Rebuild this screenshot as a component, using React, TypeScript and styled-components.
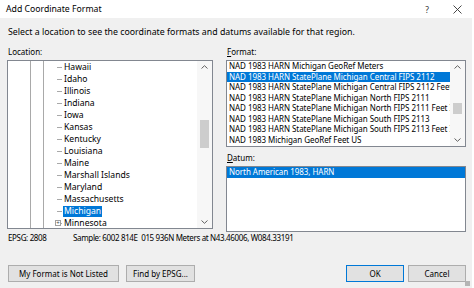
import React from "react";
import styled, { createGlobalStyle } from "styled-components";

const Global = createGlobalStyle`
  html, body { margin: 0; padding: 0; background: #ffffff; }
  body {
    font-family: "Noto Sans", "Open Sans", sans-serif;
    font-size: 8px;
    color: #000000;
  }
  * { box-sizing: border-box; }
`;

const Window = styled.div`
  position: relative;
  width: 472px;
  height: 288px;
  background: #f0f0f0;
  display: flex;
  flex-direction: column;
  overflow: hidden;
`;

const TitleBar = styled.div`
  height: 18px;
  flex: none;
  background: #ffffff;
  display: flex;
  align-items: center;
  padding-left: 6px;
`;

const Title = styled.div`
  flex: 1;
  font-size: 8.7px;
  line-height: 12px;
`;

const TitleButton = styled.div`
  width: 30px;
  height: 18px;
  display: flex;
  align-items: center;
  justify-content: center;
  font-size: 8.5px;
  color: #333;
`;

const Body = styled.div`
  padding: 0 6px 0 7px;
  display: flex;
  flex-direction: column;
`;

const Intro = styled.div`
  margin-top: 8px;
  font-size: 8.8px;
  line-height: 12px;
  padding-left: 1px;
`;

const Columns = styled.div`
  margin-top: 8px;
  display: grid;
  grid-template-columns: 206px 240px;
  column-gap: 13px;
  align-items: start;
`;

const Column = styled.div`
  display: flex;
  flex-direction: column;
`;

const Label = styled.div<{ $gap?: number }>`
  line-height: 12px;
  height: 12px;
  padding-left: 1px;
  margin-top: ${(p) => p.$gap ?? 0}px;
  margin-bottom: 2px;
  u { text-decoration: underline; text-underline-offset: 1px; }
`;

const Box = styled.div<{ $h: number }>`
  height: ${(p) => p.$h}px;
  border: 1px solid #828790;
  background: #ffffff;
  display: flex;
  overflow: hidden;
`;

const TreeList = styled.div`
  flex: 1;
  display: flex;
  flex-direction: column;
  font-size: 8.6px;
  background-image: linear-gradient(#a9a9a9, #a9a9a9), linear-gradient(#a9a9a9, #a9a9a9);
  background-size: 1px 100%, 1px 100%;
  background-position: 22px 0, 35px 0;
  background-repeat: no-repeat;
`;

const TreeRow = styled.div`
  height: 12px;
  flex: none;
  display: flex;
  align-items: center;
  padding-left: 46px;
`;

const Connector = styled.div`
  width: 8px;
  height: 12px;
  flex: none;
  display: flex;
  align-items: center;
  background-image: linear-gradient(#a9a9a9, #a9a9a9);
  background-size: 5px 1px;
  background-position: 3px 50%;
  background-repeat: no-repeat;
`;

const Expander = styled.div`
  width: 6px;
  height: 6px;
  margin-left: 1px;
  border: 1px solid #a0a0a0;
  background: #fff;
  display: flex;
  align-items: center;
  justify-content: center;
  font-size: 6px;
  line-height: 1;
  color: #444;
`;

const ItemText = styled.span<{ $sel?: boolean }>`
  margin-left: 1px;
  padding: 0 1px;
  line-height: 11px;
  height: 11px;
  white-space: nowrap;
  background: ${(p) => (p.$sel ? "#0078d7" : "transparent")};
  color: ${(p) => (p.$sel ? "#ffffff" : "#000000")};
`;

const List = styled.div`
  flex: 1;
  min-width: 0;
  display: flex;
  flex-direction: column;
  overflow: hidden;
  letter-spacing: -0.05px;
`;

const ListRow = styled.div<{ $sel?: boolean }>`
  height: 10.5px;
  flex: none;
  line-height: 10.5px;
  padding-left: 2px;
  white-space: nowrap;
  overflow: hidden;
  background: ${(p) => (p.$sel ? "#0078d7" : "transparent")};
  color: ${(p) => (p.$sel ? "#ffffff" : "#000000")};
`;

const ScrollBar = styled.div`
  width: 15px;
  flex: none;
  background: #f7f7f7;
  display: flex;
  flex-direction: column;
  align-items: center;
`;

const Arrow = styled.div`
  height: 12px;
  width: 15px;
  flex: none;
  display: flex;
  align-items: center;
  justify-content: center;
`;

const Track = styled.div<{ $top: number; $len: number }>`
  flex: 1;
  width: 100%;
  display: flex;
  flex-direction: column;
  align-items: center;
  &::before {
    content: "";
    display: block;
    height: ${(p) => p.$top}px;
    flex: none;
  }
  &::after {
    content: "";
    display: block;
    width: 9px;
    height: ${(p) => p.$len}px;
    background: #cdcdcd;
    flex: none;
  }
`;

const Status = styled.div`
  display: flex;
  line-height: 12px;
  padding-left: 1px;
  white-space: pre;
  letter-spacing: -0.35px;
`;

const StatusCode = styled.div`
  width: 65px;
`;

const ButtonRow = styled.div`
  margin-top: 21px;
  display: flex;
  justify-content: space-between;
  padding-left: 1px;
`;

const ButtonGroup = styled.div<{ $gap: number }>`
  display: flex;
  gap: ${(p) => p.$gap}px;
`;

const Button = styled.div<{ $w: number; $primary?: boolean }>`
  width: ${(p) => p.$w}px;
  height: 17px;
  background: #e1e1e1;
  border: 1px solid ${(p) => (p.$primary ? "#0078d7" : "#adadad")};
  display: flex;
  align-items: center;
  justify-content: center;
  white-space: nowrap;
`;

const Grip = styled.div`
  position: absolute;
  right: 2px;
  bottom: 2px;
  width: 5px;
  height: 5px;
  background-image: radial-gradient(circle, #b0b0b0 0.7px, transparent 0.8px);
  background-size: 2px 2px;
`;

const Chevron = ({ up }: { up?: boolean }) => (
  <svg width="7" height="4" viewBox="0 0 7 4">
    <path
      d={up ? "M0.5 3.5 L3.5 0.7 L6.5 3.5" : "M0.5 0.5 L3.5 3.3 L6.5 0.5"}
      fill="none"
      stroke="#606060"
      strokeWidth="1"
    />
  </svg>
);

const Scroll = ({ top, len }: { top: number; len: number }) => (
  <ScrollBar>
    <Arrow>
      <Chevron up />
    </Arrow>
    <Track $top={top} $len={len} />
    <Arrow>
      <Chevron />
    </Arrow>
  </ScrollBar>
);

const states = [
  "Hawaii",
  "Idaho",
  "Illinois",
  "Indiana",
  "Iowa",
  "Kansas",
  "Kentucky",
  "Louisiana",
  "Maine",
  "Marshall Islands",
  "Maryland",
  "Massachusetts",
  "Michigan",
  "Minnesota",
];

const formats = [
  "NAD 1983 HARN Michigan GeoRef Meters",
  "NAD 1983 HARN StatePlane Michigan Central FIPS 2112",
  "NAD 1983 HARN StatePlane Michigan Central FIPS 2112 Feet Intl",
  "NAD 1983 HARN StatePlane Michigan North FIPS 2111",
  "NAD 1983 HARN StatePlane Michigan North FIPS 2111 Feet Intl",
  "NAD 1983 HARN StatePlane Michigan South FIPS 2113",
  "NAD 1983 HARN StatePlane Michigan South FIPS 2113 Feet Intl",
  "NAD 1983 Michigan GeoRef Feet US",
  "NAD 1983 Michigan GeoRef Meters",
];

export default function App() {
  return (
    <>
      <Global />
      <Window>
        <TitleBar>
          <Title>Add Coordinate Format</Title>
          <TitleButton>?</TitleButton>
          <TitleButton>
            <svg width="9" height="9" viewBox="0 0 9 9">
              <path d="M0.5 0.5 L8.5 8.5 M8.5 0.5 L0.5 8.5" stroke="#333" strokeWidth="0.9" />
            </svg>
          </TitleButton>
        </TitleBar>
        <Body>
          <Intro>Select a location to see the coordinate formats and datums available for that region.</Intro>
          <Columns>
            <Column>
              <Label>Location:</Label>
              <Box $h={169}>
                <TreeList>
                  {states.map((s) => (
                    <TreeRow key={s}>
                      <Connector>{s === "Minnesota" && <Expander>+</Expander>}</Connector>
                      <ItemText $sel={s === "Michigan"}>{s}</ItemText>
                    </TreeRow>
                  ))}
                </TreeList>
                <Scroll top={47} len={28} />
              </Box>
            </Column>
            <Column>
              <Label>
                <u>F</u>ormat:
              </Label>
              <Box $h={87}>
                <List>
                  {formats.map((f, i) => (
                    <ListRow key={f} $sel={i === 1}>
                      {f}
                    </ListRow>
                  ))}
                </List>
                <Scroll top={30} len={11} />
              </Box>
              <Label $gap={5}>
                <u>D</u>atum:
              </Label>
              <Box $h={66}>
                <List>
                  <ListRow $sel>North American 1983, HARN</ListRow>
                </List>
              </Box>
            </Column>
          </Columns>
          <Status>
            <StatusCode>EPSG: 2808</StatusCode>
            <div>Sample: 6002 814E  015 936N Meters at N43.46006, W084.33191</div>
          </Status>
          <ButtonRow>
            <ButtonGroup $gap={7}>
              <Button $w={111}>My Format is Not Listed</Button>
              <Button $w={69}>Find by EPSG...</Button>
            </ButtonGroup>
            <ButtonGroup $gap={4}>
              <Button $w={58} $primary>
                OK
              </Button>
              <Button $w={58}>Cancel</Button>
            </ButtonGroup>
          </ButtonRow>
        </Body>
        <Grip />
      </Window>
    </>
  );
}
